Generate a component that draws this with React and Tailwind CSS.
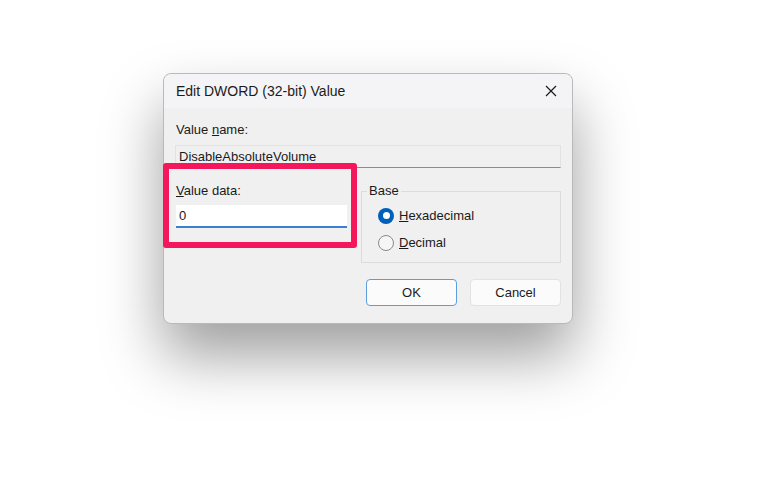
import React from "react";

function RadioDot({ checked }) {
  return checked ? (
    <span className="flex h-[16px] w-[16px] items-center justify-center rounded-full bg-[#005fb8]">
      <span className="h-[7px] w-[7px] rounded-full bg-white" />
    </span>
  ) : (
    <span className="h-[16px] w-[16px] rounded-full border border-[#8a8a8a] bg-[#f6f6f6]" />
  );
}

export default function App() {
  return (
    <div
      className="h-[481px] w-full overflow-hidden bg-white pl-[163px] pt-[73px] text-[13px] text-[#1a1a1a]"
      style={{ fontFamily: '"Liberation Sans", Arial, sans-serif' }}
    >
      <div className="relative w-[410px] h-[251px] rounded-lg border border-[#b9b9b9] bg-[#f0f0f0] shadow-[0_32px_60px_rgba(0,0,0,0.38)]">
        {/* Title bar */}
        <div className="flex h-[34px] items-center justify-between rounded-t-lg bg-[#f4f4f6] pl-[12px] pr-[15px]">
          <span className="text-[14px] text-[#1b1b1b]">Edit DWORD (32-bit) Value</span>
          <svg width="12" height="12" viewBox="0 0 12 12" className="text-[#1b1b1b]">
            <path d="M1 1L11 11M11 1L1 11" stroke="currentColor" strokeWidth="1.2" fill="none" />
          </svg>
        </div>

        {/* Body */}
        <div className="px-[11px] pt-[12px]">
          <div className="ml-[1px] leading-[20px]">
            Value <u>n</u>ame:
          </div>
          <div className="mt-[5px] flex h-[23px] items-center border border-[#e2e2e2] border-b-[#8c8c8c] bg-[#f0f0f0] pl-[3px]">
            DisableAbsoluteVolume
          </div>

          <div className="mt-[13px] flex">
            <div className="ml-[1px] w-[171px]">
              <div className="leading-[20px]">
                <u>V</u>alue data:
              </div>
              <div className="mt-[4px] flex h-[23px] items-center border-b-2 border-[#3d7fcf] bg-white pl-[3px]">
                0
              </div>
            </div>

            <fieldset className="ml-auto mt-[2px] h-[80px] w-[200px] border border-[#dcdcdc]">
              <legend className="ml-[5px] px-[2px] leading-[16px]">Base</legend>
              <div className="pl-[16px]">
                <div className="mt-[7px] flex items-center gap-[5px] leading-[19px]">
                  <RadioDot checked />
                  <span>
                    <u>H</u>exadecimal
                  </span>
                </div>
                <div className="mt-[8px] flex items-center gap-[5px] leading-[19px]">
                  <RadioDot />
                  <span>
                    <u>D</u>ecimal
                  </span>
                </div>
              </div>
            </fieldset>
          </div>

          <div className="mt-[16px] flex justify-end gap-[13px]">
            <button className="flex h-[27px] w-[91px] items-center justify-center rounded-[4px] border border-[#5c9ddb] bg-[#fbfbfb] text-[13px]">
              OK
            </button>
            <button className="flex h-[27px] w-[91px] items-center justify-center rounded-[4px] border border-[#e2e2e2] bg-[#fbfbfb] text-[13px]">
              Cancel
            </button>
          </div>
        </div>

        {/* Highlight annotation */}
        <div className="pointer-events-none absolute left-[-1px] top-[89px] h-[85px] w-[194px] rounded-[3px] border-[6px] border-[#f5175c]" />
      </div>
    </div>
  );
}
